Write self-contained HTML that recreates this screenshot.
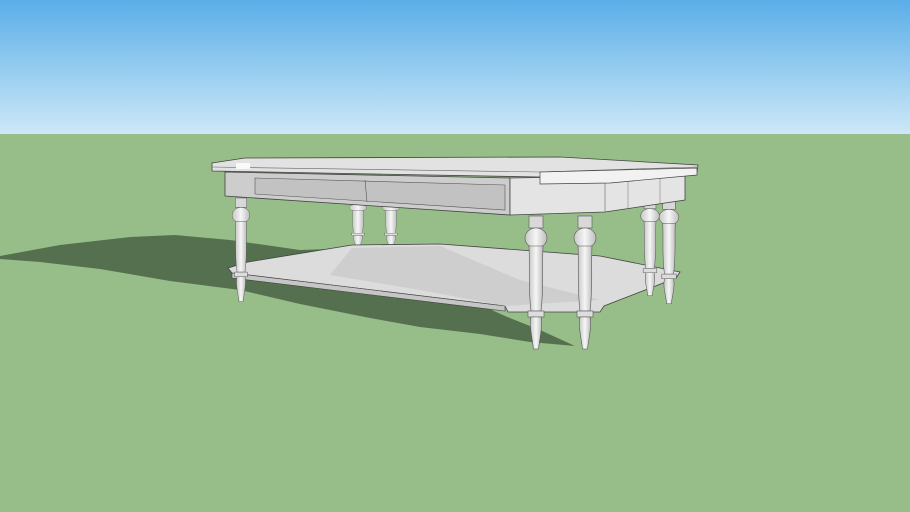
<!DOCTYPE html>
<html><head><style>html,body{margin:0;padding:0;width:910px;height:512px;overflow:hidden;background:#97bd89}</style></head>
<body>
<svg width="910" height="512" viewBox="0 0 910 512" xmlns="http://www.w3.org/2000/svg">
<defs>
<linearGradient id="sky" x1="0" y1="0" x2="0" y2="1">
<stop offset="0" stop-color="#5aaee8"/><stop offset="1" stop-color="#cde8f7"/>
</linearGradient>
<linearGradient id="leg" x1="0" y1="0" x2="1" y2="0">
<stop offset="0" stop-color="#c8c8c8"/><stop offset="0.5" stop-color="#f6f6f6"/><stop offset="1" stop-color="#bdbdbd"/>
</linearGradient>
<g id="L">
<rect x="-7" y="0" width="14" height="12" fill="#d8d8d8" stroke="#555" stroke-width="0.6"/>
<ellipse cx="0" cy="22" rx="11" ry="10" fill="url(#leg)" stroke="#555" stroke-width="0.6"/>
<path d="M-7 30 C-6 50 -8 70 -5 95 L5 95 C8 70 6 50 7 30Z" fill="url(#leg)" stroke="#555" stroke-width="0.6"/>
<rect x="-8" y="95" width="16" height="6" fill="#ddd" stroke="#555" stroke-width="0.6"/>
<path d="M-5 101 C-7 110 -4 120 -2.5 133 L2.5 133 C4 120 7 110 5 101Z" fill="url(#leg)" stroke="#555" stroke-width="0.6"/>
</g>
</defs>
<rect width="910" height="134" fill="url(#sky)"/>
<rect y="134" width="910" height="378" fill="#97bd89"/>
<path d="M0 256 L60 245 L130 237 L175 235 L230 240 L300 250 L360 248 L420 270 L470 300 L505 316 L540 330 L575 346 L530 342 L480 334 L420 327 L370 318 L300 304 L240 290 L170 281 L100 269 L40 262 L0 259Z" fill="#55704e"/>
<use href="#L" transform="translate(358,200) scale(0.8,0.35)"/>
<use href="#L" transform="translate(391,200) scale(0.8,0.35)"/>
<path d="M228 268 L248 262 L352 245 L440 244 L600 256 L680 272 L676 278 L604 306 L600 312 L508 312 L505 306 L232 273Z" fill="#dcdcdc" stroke="#444" stroke-width="0.8"/>
<path d="M232 273 L505 306 L505 311 L232 278Z" fill="#c6c6c6" stroke="#444" stroke-width="0.6"/>
<path d="M352 248 L440 246 L520 280 L600 300 L505 306 L420 290 L330 275Z" fill="#c8c8c8" opacity="0.7"/>
<use href="#L" transform="translate(241,198) scale(0.8,0.78)"/>
<use href="#L" transform="translate(650,200) scale(0.85,0.72)"/>
<use href="#L" transform="translate(669,200) scale(0.9,0.78)"/>
<use href="#L" transform="translate(536,216)"/>
<use href="#L" transform="translate(585,216)"/>
<path d="M225 172 L510 178 L510 215 L225 196Z" fill="#cdcdcd" stroke="#444" stroke-width="0.8"/>
<path d="M255 178 L505 185 L505 210 L255 194Z" fill="#c2c2c2" stroke="#555" stroke-width="0.6"/>
<line x1="365" y1="180" x2="367" y2="202" stroke="#555" stroke-width="0.6"/>
<path d="M510 178 L685 175 L685 200 L605 212 L510 215Z" fill="#e4e4e4" stroke="#444" stroke-width="0.8"/>
<path d="M605 182 L605 212" stroke="#666" stroke-width="0.6"/>
<path d="M628 180 L628 208 M660 178 L660 204" stroke="#777" stroke-width="0.5"/>
<path d="M212 163 L245 158 L560 157 L698 165 L697 172 L540 177 L212 171Z" fill="#e2e2e2" stroke="#444" stroke-width="0.8"/>
<path d="M212 167 L540 172 L697 167" fill="none" stroke="#666" stroke-width="0.6"/>
<path d="M540 172 L697 168 L697 175 L610 183 L540 184Z" fill="#f2f2f2" stroke="#444" stroke-width="0.7"/>
<rect x="236" y="163" width="14" height="6" fill="#fafafa"/>
</svg>
</body></html>
